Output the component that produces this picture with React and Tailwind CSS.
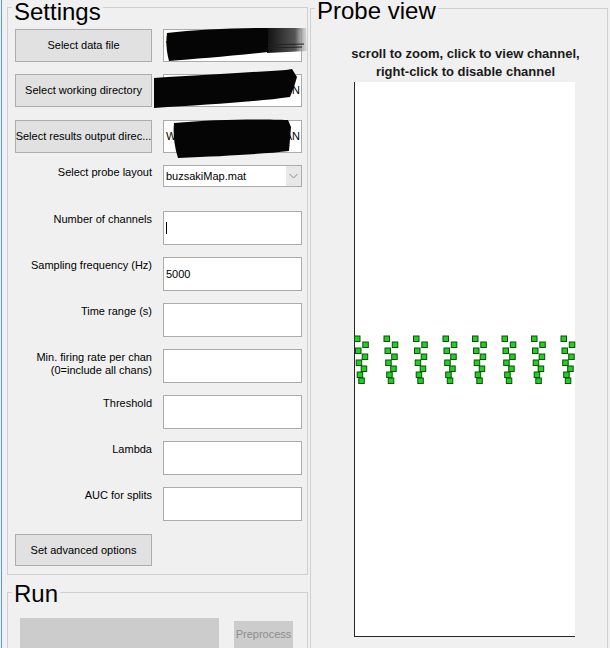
import React from 'react';

const DX = [0, 8.3, 1, 7.7, 1.7, 6.7, 2.7, 4.3];

const GroupBox = ({ title, titleClass, className, children }) => (
  <div className={`relative shrink-0 border border-[#d0d0d0] ${className}`}>
    <span
      className={`absolute left-[4px] bg-[#f0f0f0] px-[2px] text-[24px] leading-[24px] text-black ${titleClass}`}
    >
      {title}
    </span>
    {children}
  </div>
);

const Btn = ({ children, className = 'h-[33px]' }) => (
  <button
    type="button"
    className={`flex w-[137px] shrink-0 items-center justify-center whitespace-nowrap border border-[#adadad] bg-[#e1e1e1] text-[11px] text-black ${className}`}
  >
    {children}
  </button>
);

const Field = ({ children, className = 'h-[34px]' }) => (
  <div
    className={`relative flex w-[139px] items-center border border-[#ababab] bg-white px-[1px] text-[11px] text-black ${className}`}
  >
    {children}
  </div>
);

const Scribble = ({ d, smear }) => (
  <svg className="pointer-events-none absolute left-0 top-0 h-full w-full overflow-visible">
    <defs>
      <linearGradient id="smear" x1="0" x2="1" y1="0" y2="0">
        <stop offset="0" stopColor="#111" />
        <stop offset="0.7" stopColor="#555" />
        <stop offset="1" stopColor="#ccc" stopOpacity="0.6" />
      </linearGradient>
    </defs>
    {smear && (
      <>
        <path d="M103,-2 L142,-2 L143,21 L103,23 Z" fill="url(#smear)" />
        <path d="M100,15 L140,14 M104,18 L138,17" stroke="#222" strokeWidth="1" />
      </>
    )}
    <path d={d} fill="#050505" />
  </svg>
);

const Row = ({ label, children }) => (
  <div className="mt-[12px] flex">
    <div className="mt-[2px] w-[137px] shrink-0 text-right text-[11px] leading-[13px] text-black">
      {label}
    </div>
    <div className="ml-[11px]">{children}</div>
  </div>
);

export default function App() {
  return (
    <div className="flex h-[648px] w-[610px] overflow-hidden bg-[#f0f0f0] [font-family:'Liberation_Sans',Arial,sans-serif]">
      <div className="ml-px h-full w-px shrink-0 bg-[#5a9ad8]" />

      {/* left column */}
      <div className="ml-[5px] flex w-[301px] shrink-0 flex-col">
        <GroupBox title="Settings" titleClass="top-[-8px]" className="mt-[7px] h-[568px]">
          <div className="flex flex-col pl-[7px] pt-[21px]">
            <div className="flex">
              <Btn>Select data file</Btn>
              <div className="ml-[11px]">
                <Field className="h-[33px]">
                  <span className="ml-[1px]">W</span>
                  <Scribble smear d="M3,3 C30,0 70,-2 104,-2 L104,22 C70,26 30,29 5,31 C2,20 2,10 3,3 Z" />
                </Field>
              </div>
            </div>
            <div className="mt-[12px] flex">
              <Btn>Select working directory</Btn>
              <div className="ml-[11px]">
                <Field className="h-[33px] justify-end">
                  <span>N</span>
                  <Scribble d="M-10,3 C40,0 90,-3 122,-5 L128,-6 L133,2 L130,12 L126,22 C90,27 40,30 -10,33 Z" />
                </Field>
              </div>
            </div>
            <div className="mt-[13px] flex">
              <Btn>Select results output direc...</Btn>
              <div className="ml-[11px]">
                <Field className="h-[33px] justify-between">
                  <span className="ml-[1px]">Wo</span>
                  <span>AN</span>
                  <Scribble d="M10,2 C50,-2 100,-2 124,-1 L127,6 L125,30 C100,33 60,35 14,37 C10,25 9,12 10,2 Z" />
                </Field>
              </div>
            </div>
            <div className="mt-[12px] flex">
              <div className="mt-px w-[137px] shrink-0 text-right text-[11px] leading-[13px] text-black">
                Select probe layout
              </div>
              <div className="ml-[11px] flex h-[22px] w-[139px] items-center border border-[#acacac] bg-white text-[11px] text-black">
                <span className="ml-[2px] flex-1">buzsakiMap.mat</span>
                <span className="flex h-full w-[15px] items-center justify-center bg-[#e8e8e8]">
                  <svg width="9" height="6" viewBox="0 0 9 6">
                    <path d="M0.5,1 L4.5,5 L8.5,1" fill="none" stroke="#8a8a8a" strokeWidth="1" />
                  </svg>
                </span>
              </div>
            </div>
            <div className="mt-[12px]">
              <Row label="Number of channels">
                <Field>
                  <span className="ml-[1px] h-[12px] w-px bg-black" />
                </Field>
              </Row>
            </div>
            <Row label="Sampling frequency (Hz)">
              <Field>
                <span className="ml-[1px]">5000</span>
              </Field>
            </Row>
            <Row label="Time range (s)">
              <Field />
            </Row>
            <Row
              label={
                <>
                  Min. firing rate per chan
                  <br />
                  (0=include all chans)
                </>
              }
            >
              <Field />
            </Row>
            <Row label="Threshold">
              <Field />
            </Row>
            <Row label="Lambda">
              <Field />
            </Row>
            <Row label="AUC for splits">
              <Field />
            </Row>
            <div className="mt-[13px]">
              <Btn className="h-[32px]">Set advanced options</Btn>
            </div>
          </div>
        </GroupBox>

        <GroupBox title="Run" titleClass="top-[-11px]" className="mt-[17px] h-[100px]">
          <div className="flex pl-[12px] pt-[25px]">
            <div className="h-[40px] w-[199px] bg-[#cccccc]" />
            <div className="ml-[15px] mt-[3px] flex h-[40px] w-[59px] justify-center bg-[#cccccc] pt-[7px] text-[11px] leading-[13px] text-[#8c8c8c]">
              Preprocess
            </div>
          </div>
        </GroupBox>
      </div>

      {/* probe view */}
      <GroupBox title="Probe view" titleClass="top-[-10px]" className="ml-[2px] mt-[8px] h-[700px] w-[298px]">
        <div className="w-[296px] whitespace-nowrap pl-[13px] pt-[36px] text-center text-[13px] font-bold leading-[18px] text-[#1a1a1a]">
          scroll to zoom, click to view channel,
          <br />
          right-click to disable channel
        </div>
        <div className="relative ml-[43px] mt-px h-[555px] w-[221px] border-b border-l border-[#262626] bg-white">
          <svg
            className="absolute left-[-1px] top-0 overflow-visible"
            width="221"
            height="555"
            viewBox="0 0 221 555"
          >
            {Array.from({ length: 8 }).map((_, i) =>
              DX.map((dx, k) => (
                <rect
                  key={`${i}-${k}`}
                  x={i * 29.5 + dx + 0.5}
                  y={253.5 + k * 6 + 0.5}
                  width="5.5"
                  height="5.5"
                  fill="#1fd01f"
                  stroke="#0b4f0b"
                  strokeWidth="1"
                />
              ))
            )}
          </svg>
        </div>
      </GroupBox>
    </div>
  );
}
